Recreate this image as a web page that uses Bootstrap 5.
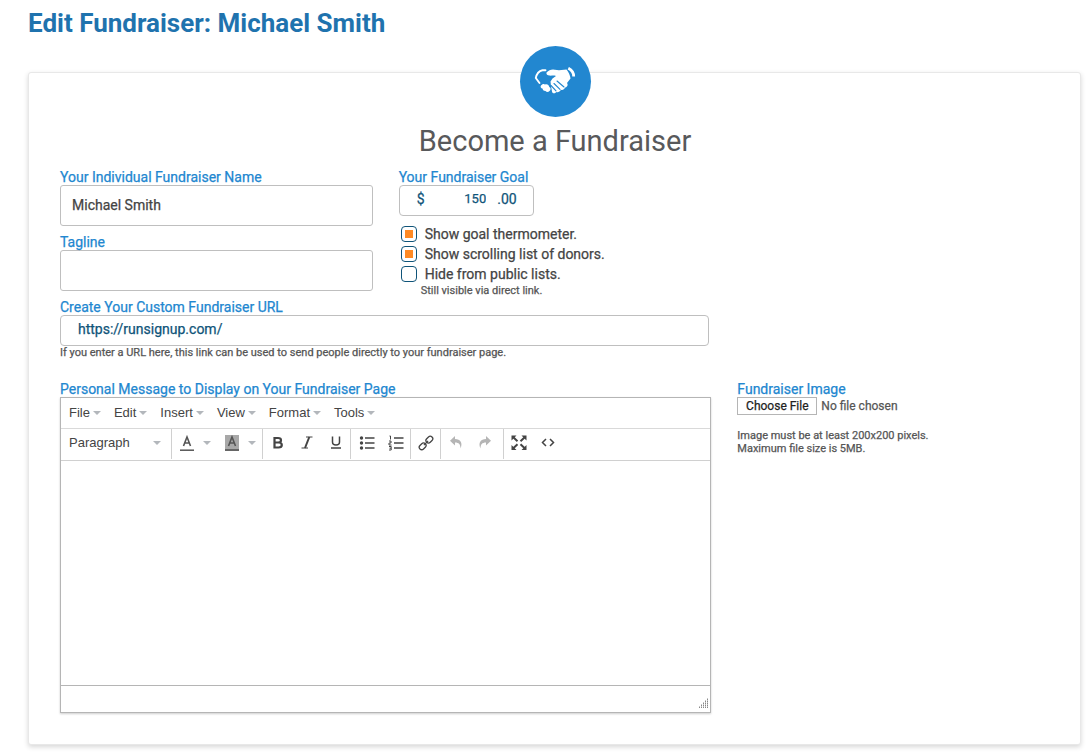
<!DOCTYPE html>
<html lang="en">
<head>
<meta charset="utf-8">
<meta name="viewport" content="width=device-width, initial-scale=1">
<title>Edit Fundraiser</title>
<link href="https://cdn.jsdelivr.net/npm/bootstrap@5.3.0/dist/css/bootstrap.min.css" rel="stylesheet">
<style>
  body { font-family: Roboto, "Liberation Sans", sans-serif; font-size: 14px; line-height: 16px; color: #444; background: #fff; }
  .page { padding: 6px 10px 9px 28px; }
  .page-title { font-size: 26px; line-height: 34px; font-weight: 700; color: #1f73ae; margin-bottom: 32px; }
  .panel { border: 1px solid #e8e8e8; border-radius: 3px; background: #fff; padding: 0 30px 31px 31px; box-shadow: 0 2px 5px rgba(0,0,0,.16); }
  .panel .row { --bs-gutter-x: 26px; }
  .emblem { width: 71px; height: 71px; margin-top: -27px; background: #2287d0; }
  .panel-title { font-size: 29px; line-height: 36px; font-weight: 400; color: #58595b; margin: 6px 0 10px; }
  .field-label, .option, .tall-input, .joined, .note, .file-pick { -webkit-text-stroke: .25px currentColor; }
  .field-label { display: block; color: #2287d0; line-height: 16px; }
  .tall-input { height: 41px; padding: 0 11px 2px; border: 1px solid #bfbfbf; border-radius: 3px; font-size: 14px; color: #444; }
  .joined { height: 31px; border: 1px solid #bfbfbf; border-radius: 4px; color: #0f5479; padding-bottom: 3px; }
  .joined input { border: 0; outline: 0; background: none; color: inherit; padding: 0; min-width: 0; }
  .url-box { padding-left: 17px; margin-right: 2px; }
  .goal { width: 135px; padding-left: 17px; padding-right: 16px; }
  .goal input { font-size: 13px; text-align: right; padding-right: 11px; }
  .note { font-size: 11px; line-height: 13px; color: #555; }
  .options { margin: 8px 0 0 2px; }
  .option { height: 20px; gap: 8px; }
  .option input { appearance: none; width: 16px; height: 16px; margin: 0; border: 1px solid #0f5479; border-radius: 4px; background: #fff; }
  .option input:checked { background: #ff8a24; background-clip: content-box; padding: 3px; }
  .message-row { padding-top: 22px; }
  .editor { border: 1px solid #b5b5b5; box-shadow: 0 1px 2px rgba(0,0,0,.2); font-family: "Liberation Sans", Arial, sans-serif; font-size: 13px; }
  .editor button { border: 0; background: none; padding: 0; color: #444; }
  .menus { height: 31px; padding-left: 8px; gap: 13px; border-bottom: 1px solid #d9d9d9; }
  .menus button::after, .caret::after { content: ""; display: inline-block; border: 4px solid transparent; border-top-color: #b3b7bc; border-bottom: 0; margin-left: 3px; vertical-align: 2px; }
  .tools { height: 32px; border-bottom: 1px solid #d0d0d0; }
  .tool-group { border-right: 1px solid #d0d0d0; height: 30px; padding-bottom: 3px; }
  .tool-group:last-child { border: 0; }
  .tool { width: 29px; height: 26px; display: grid; place-items: center; }
  .lists { padding-left: 1px; }
  .para { width: 110px; padding: 0 10px 0 8px !important; }
  .pick { width: 45px; padding: 0 6px 0 8px !important; display: flex; align-items: center; justify-content: space-between; }
  .message { display: block; width: 100%; height: 224px; border: 0; outline: 0; resize: none; padding: 8px; }
  .status { height: 27px; border-top: 1px solid #b5b5b5; padding: 0 2px 4px; }
  .file-pick { display: block; width: 100%; font-size: 12px; line-height: 16px; height: 18px; color: #555; }
  .file-pick::file-selector-button { height: 18px; width: 80px; border: 1px solid #b5b5b5; background: #fff; padding: 0; margin: 0 4px 0 0; color: #222; }
  .image-note { margin-top: 14px; }
</style>
</head>
<body>
<main class="page">
  <h1 class="page-title">Edit Fundraiser: Michael Smith</h1>
  <form class="panel d-flow-root">
    <div class="d-flex flex-column align-items-center">
      <div class="emblem rounded-circle d-flex align-items-center justify-content-center">
        <svg width="42" height="30" viewBox="0 0 42 30" aria-hidden="true">
          <path d="M11.500 3.200H8.500C5 4 2.500 7.500 1.800 11L5.500 16" fill="none" stroke="#fff" stroke-width="1.900" stroke-linecap="round" stroke-linejoin="round"/>
          <path d="M7 18.500C8 17 10 16.500 11 17.500C13 16.500 15 18 15.300 20C17 20.500 17 23 15.500 24C14 25.500 12.500 25 11.500 24C9.500 24 8.500 22.500 8.500 21.500C7 21.500 6 20 7 18.500Z" fill="#fff"/>
          <path d="M12.500 5.500C14.500 3.500 16.500 2.500 19 2.500L25 3.200L32.500 2.500C34.500 5 36.300 8.500 36.500 11.500L33 16C34.500 18 33 20.500 31 20.500C30.500 22.500 28.500 23.500 27 22.800C26 25 23.800 25.500 22.300 25C21 27 18 26.500 18 24.500L17 19L16.500 14.500L18.500 11.500L22 9C19.500 8 17 9 15.500 8.500C13.500 8.500 12 7.500 12.500 5.500Z" fill="#fff"/>
          <path d="M17 18.500L22 23.800M20 16.500L26 22.300M23 14L30 20" fill="none" stroke="#2287d0" stroke-width="1.100" stroke-linecap="round"/>
          <path d="M34.300 1.200C37.500 2.800 39.700 6 39.700 9.500" fill="none" stroke="#fff" stroke-width="2.800"/>
        </svg>
      </div>
      <h2 class="panel-title">Become a Fundraiser</h2>
    </div>
    <div class="row">
      <div class="col-8">
        <div class="row">
          <div class="col-6">
            <label class="field-label" for="name">Your Individual Fundraiser Name</label>
            <input class="tall-input d-block w-100 mb-2" id="name" type="text" value="Michael Smith">
            <label class="field-label" for="tagline">Tagline</label>
            <input class="tall-input d-block w-100 mb-2" id="tagline" type="text">
          </div>
          <div class="col-6">
            <label class="field-label" for="goal">Your Fundraiser Goal</label>
            <div class="joined goal d-flex align-items-center"><span>$</span><input class="flex-fill w-100" id="goal" type="text" value="150"><span>.00</span></div>
            <div class="options">
              <label class="option d-flex align-items-center"><input type="checkbox" checked>Show goal thermometer.</label>
              <label class="option d-flex align-items-center"><input type="checkbox" checked>Show scrolling list of donors.</label>
              <label class="option d-flex align-items-center"><input type="checkbox">Hide from public lists.</label>
              <div class="note ps-3 ms-1">Still visible via direct link.</div>
            </div>
          </div>
        </div>
        <label class="field-label" for="url">Create Your Custom Fundraiser URL</label>
        <div class="joined url-box d-flex align-items-center"><span>https://runsignup.com/</span><input class="flex-fill" id="url" type="text"></div>
        <div class="note">If you enter a URL here, this link can be used to send people directly to your fundraiser page.</div>
      </div>
    </div>
    <div class="row message-row">
      <div class="col-8">
        <label class="field-label" for="message">Personal Message to Display on Your Fundraiser Page</label>
        <div class="editor">
          <div class="menus d-flex align-items-center">
            <button type="button">File</button><button type="button">Edit</button><button type="button">Insert</button><button type="button">View</button><button type="button">Format</button><button type="button">Tools</button>
          </div>
          <div class="tools d-flex">
            <div class="tool-group d-flex align-items-center"><button type="button" class="para caret d-flex align-items-center justify-content-between">Paragraph</button></div>
            <div class="tool-group d-flex align-items-center">
              <button type="button" class="pick caret" aria-label="Text color"><svg width="14" height="16" viewBox="0 0 14 16"><path d="M3.500 11L7 2L10.500 11M4.700 8H9.300" fill="none" stroke="#555" stroke-width="1.600"/><path d="M0 15.200H14" stroke="#555" stroke-width="1.500"/></svg></button>
              <button type="button" class="pick caret" aria-label="Background color"><svg width="14" height="16" viewBox="0 0 14 16"><path d="M0 0H14V16H0Z" fill="#a8a8a8"/><path d="M3.500 11L7 2L10.500 11M4.700 8H9.300" fill="none" stroke="#555" stroke-width="1.600"/><path d="M0 15H14" stroke="#666" stroke-width="2"/></svg></button>
            </div>
            <div class="tool-group d-flex align-items-center">
              <button type="button" class="tool" aria-label="Bold"><svg width="16" height="16" viewBox="0 0 16 16"><path d="M4.500 3H8Q11 3 11 5.200Q11 7.500 8 7.500H4.500ZM4.500 7.500H8.500Q11.800 7.500 11.800 10Q11.800 12.500 8.500 12.500H4.500Z" fill="none" stroke="#444" stroke-width="2.200"/></svg></button>
              <button type="button" class="tool" aria-label="Italic"><svg width="16" height="16" viewBox="0 0 16 16"><path d="M7 2H13.500M2.500 13H9" stroke="#444" stroke-width="1"/><path d="M10.300 2L6 13" stroke="#444" stroke-width="2"/></svg></button>
              <button type="button" class="tool" aria-label="Underline"><svg width="16" height="16" viewBox="0 0 16 16"><path d="M4.500 1.500V7Q4.500 10 8 10T11.500 7V1.500M3 13H13" fill="none" stroke="#444" stroke-width="1.500"/></svg></button>
            </div>
            <div class="tool-group lists d-flex align-items-center">
              <button type="button" class="tool" aria-label="Bullet list"><svg width="16" height="16" viewBox="0 0 16 16"><path d="M6 3H15.500M6 8H15.500M6 13H15.500" stroke="#444" stroke-width="1.500"/><g fill="#444"><circle cx="2.500" cy="3" r="1.700"/><circle cx="2.500" cy="8" r="1.700"/><circle cx="2.500" cy="13" r="1.700"/></g></svg></button>
              <button type="button" class="tool" aria-label="Numbered list"><svg width="16" height="16" viewBox="0 0 16 16"><path d="M6 3H15.500M6 8H15.500M6 13H15.500" stroke="#444" stroke-width="1.500"/><path d="M1.500 1H2.500V4.500M1 6H3V8H1V10H3.500M1 11.500H3.200V15H1M1.500 13.200H3" fill="none" stroke="#444"/></svg></button>
            </div>
            <div class="tool-group d-flex align-items-center">
              <button type="button" class="tool" aria-label="Insert link"><svg width="16" height="16" viewBox="0 0 16 16"><g transform="rotate(-45 8 8)" fill="none" stroke="#444" stroke-width="1.300"><rect x="-.5" y="5.500" width="7.500" height="5" rx="2.500"/><rect x="9" y="5.500" width="7.500" height="5" rx="2.500"/><path d="M5 8H11"/></g></svg></button>
            </div>
            <div class="tool-group pe-1 d-flex align-items-center">
              <button type="button" class="tool" aria-label="Undo"><svg width="16" height="16" viewBox="0 0 16 16"><path d="M7 1V4C12.500 4 15 8 12.500 13.500C12.500 9.500 11 7.500 7 7.500V10.500L2 5.700Z" fill="#b5b5b5"/></svg></button>
              <button type="button" class="tool" aria-label="Redo"><svg width="16" height="16" viewBox="0 0 16 16"><path d="M9 1V4C3.500 4 1 8 3.500 13.500C3.500 9.500 5 7.500 9 7.500V10.500L14 5.700Z" fill="#b5b5b5"/></svg></button>
            </div>
            <div class="tool-group d-flex align-items-center">
              <button type="button" class="tool" aria-label="Fullscreen"><svg width="16" height="16" viewBox="0 0 16 16"><path d="M.5 .5H5.500L.5 5.500ZM15.500 .5H10.500L15.500 5.500ZM.5 15H5.500L.5 10ZM15.500 15H10.500L15.500 10Z" fill="#444"/><path d="M2 2L6.500 6.200M14 2L9.500 6.200M2 13.500L6.500 9.300M14 13.500L9.500 9.300" stroke="#444" stroke-width="2"/></svg></button>
              <button type="button" class="tool" aria-label="Source code"><svg width="16" height="16" viewBox="0 0 16 16"><path d="M6 4L2.500 7.500L6 11M10 4L13.500 7.500L10 11" fill="none" stroke="#444" stroke-width="1.500"/></svg></button>
            </div>
          </div>
          <textarea class="message" id="message"></textarea>
          <div class="status d-flex justify-content-end align-items-end">
            <svg width="10" height="10" viewBox="0 0 10 10" aria-hidden="true"><path d="M1.500 10V8M3.500 10V6.500M5.500 10V4.500M7.500 10V2.500M9.500 10V0" stroke="#888" stroke-dasharray="1.500 .5"/></svg>
          </div>
        </div>
      </div>
      <div class="col-4">
        <label class="field-label" for="image">Fundraiser Image</label>
        <input class="file-pick" id="image" type="file">
        <div class="note image-note">Image must be at least 200x200 pixels.<br>Maximum file size is 5MB.</div>
      </div>
    </div>
  </form>
</main>
<script src="https://cdn.jsdelivr.net/npm/bootstrap@5.3.0/dist/js/bootstrap.bundle.min.js"></script>
</body>
</html>
